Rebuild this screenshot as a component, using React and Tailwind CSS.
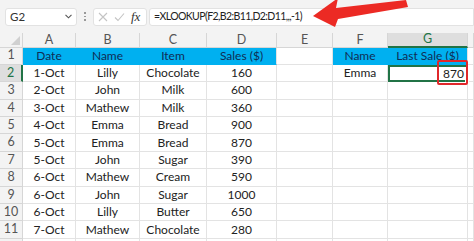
import React from 'react';

const cols = ['A', 'B', 'C', 'D', 'E', 'F', 'G', ''];

const rows = [
  ['1-Oct', 'Lilly', 'Chocolate', '160'],
  ['2-Oct', 'John', 'Milk', '600'],
  ['3-Oct', 'Mathew', 'Milk', '360'],
  ['4-Oct', 'Emma', 'Bread', '900'],
  ['5-Oct', 'Emma', 'Bread', '870'],
  ['5-Oct', 'John', 'Sugar', '390'],
  ['6-Oct', 'Mathew', 'Cream', '590'],
  ['6-Oct', 'John', 'Sugar', '1000'],
  ['6-Oct', 'Lilly', 'Butter', '650'],
  ['7-Oct', 'Mathew', 'Chocolate', '280'],
  ['', '', '', ''],
];

const gridCols = 'grid grid-cols-[23px_53px_64px_67px_70px_56px_55px_80px_1fr]';

const Cell = ({ children, className = '' }) => (
  <div className={`h-[17.4px] border-r border-b border-[#e3e3e3] flex items-center justify-center text-[12px] leading-none text-[#222] whitespace-nowrap overflow-hidden ${className}`}>
    {children}
  </div>
);

const Toolbar = () => (
  <div className="h-[33px] bg-[#f3f3f3] flex items-center pl-[5px] gap-0">
    <div className="w-[72px] h-[18px] bg-white border border-[#e2e2e2] rounded-[3px] flex items-center justify-between pl-[4px] pr-[4px]">
      <span className="text-[11.5px] text-[#333]">G2</span>
      <svg width="7" height="5" viewBox="0 0 7 5"><path d="M0.5 0.8 L3.5 3.8 L6.5 0.8" fill="none" stroke="#555" strokeWidth="1.1" /></svg>
    </div>
    <div className="w-[16px] flex flex-col items-center gap-[2px]">
      <span className="w-[1.5px] h-[1.5px] bg-[#999]" />
      <span className="w-[1.5px] h-[1.5px] bg-[#999]" />
      <span className="w-[1.5px] h-[1.5px] bg-[#999]" />
    </div>
    <div className="w-[54px] h-[18px] bg-white border border-[#e2e2e2] rounded-[3px] flex items-center pl-[4px] gap-[6px]">
      <svg width="10" height="10" viewBox="0 0 10 10"><path d="M1 1 L9 9 M9 1 L1 9" stroke="#c4c4c4" strokeWidth="1.1" /></svg>
      <svg width="11" height="10" viewBox="0 0 11 10"><path d="M1 5.5 L4 8.5 L10 1.5" fill="none" stroke="#c4c4c4" strokeWidth="1.1" /></svg>
      <span className="text-[13px] italic text-[#333] font-['Liberation_Serif',serif] leading-none">fx</span>
    </div>
    <div className="flex-1 h-[18px] bg-white border border-[#e2e2e2] rounded-l-[3px] ml-[2px] flex items-center pl-[4px]">
      <span className="text-[10.5px] tracking-[-0.6px] text-[#222]">=XLOOKUP(F2,B2:B11,D2:D11,,,-1)</span>
    </div>
  </div>
);

export default function App() {
  return (
    <div className="relative w-[474px] h-[241px] overflow-hidden bg-white font-['Lato',sans-serif]">
      <Toolbar />
      <div className={`${gridCols} h-[14.5px] bg-[#f3f3f3]`}>
        <div className="border-r border-b border-[#d6d6d6] relative">
          <svg className="absolute right-[2px] bottom-[2px]" width="9" height="9" viewBox="0 0 9 9"><path d="M9 0 L9 9 L0 9 Z" fill="#d0d0d0" /></svg>
        </div>
        {cols.map((c, i) => (
          <div
            key={i}
            className={`border-r border-[#d6d6d6] flex items-center justify-center text-[12.5px] leading-none ${c === 'G' ? 'bg-[#dedede] text-[#217346] border-b-2 border-b-[#217346]' : 'text-[#555] border-b'}`}
          >
            {c}
          </div>
        ))}
      </div>
      <div className={gridCols}>
        <div className="h-[17.4px] bg-[#f3f3f3] border-r border-b border-[#d6d6d6] flex items-center justify-center text-[12.5px] text-[#555] leading-none">1</div>
        <Cell className="bg-[#00b0f0] border-r-[#00b0f0] border-b-[#00b0f0] text-[#0f2d55]!">Date</Cell>
        <Cell className="bg-[#00b0f0] border-r-[#00b0f0] border-b-[#00b0f0] text-[#0f2d55]!">Name</Cell>
        <Cell className="bg-[#00b0f0] border-r-[#00b0f0] border-b-[#00b0f0] text-[#0f2d55]!">Item</Cell>
        <Cell className="bg-[#00b0f0] border-b-[#00b0f0] text-[#0f2d55]!">Sales ($)</Cell>
        <Cell />
        <Cell className="bg-[#00b0f0] border-r-[#00b0f0] border-b-[#00b0f0] text-[#0f2d55]!">Name</Cell>
        <Cell className="bg-[#00b0f0] border-b-[#00b0f0] text-[#0f2d55]!">Last Sale ($)</Cell>
        <Cell />
        {rows.map((r, i) => {
          const n = i + 2;
          return (
            <React.Fragment key={n}>
              <div className={`h-[17.4px] border-b border-[#d6d6d6] flex items-center justify-center text-[12.5px] leading-none ${n === 2 ? 'bg-[#dedede] text-[#217346] border-r-2 border-r-[#217346]' : 'bg-[#f3f3f3] text-[#555] border-r'}`}>
                {n <= 11 ? n : ''}
              </div>
              <Cell>{r[0]}</Cell>
              <Cell>{r[1]}</Cell>
              <Cell>{r[2]}</Cell>
              <Cell>{r[3]}</Cell>
              <Cell />
              <Cell>{n === 2 ? 'Emma' : ''}</Cell>
              {n === 2 ? (
                <div className="relative h-[17.4px] border-2 border-[#217346] flex items-center justify-end pr-[2px] text-[12px] leading-none text-[#222]">
                  870
                  <span className="absolute right-[-3px] bottom-[-3px] w-[4px] h-[4px] bg-[#217346] border border-white" />
                </div>
              ) : (
                <Cell />
              )}
              <Cell />
            </React.Fragment>
          );
        })}
      </div>
      <div className="absolute left-[437px] top-[60px] w-[31px] h-[25px] border-2 border-[#e0282b] rounded-[2px]" />
      <svg className="absolute left-0 top-0" width="474" height="40" viewBox="0 0 474 40">
        <polygon points="313,16 338,-2 336,8 406,0 408,7 338,19 335,27" fill="#ec2a24" />
      </svg>
    </div>
  );
}
